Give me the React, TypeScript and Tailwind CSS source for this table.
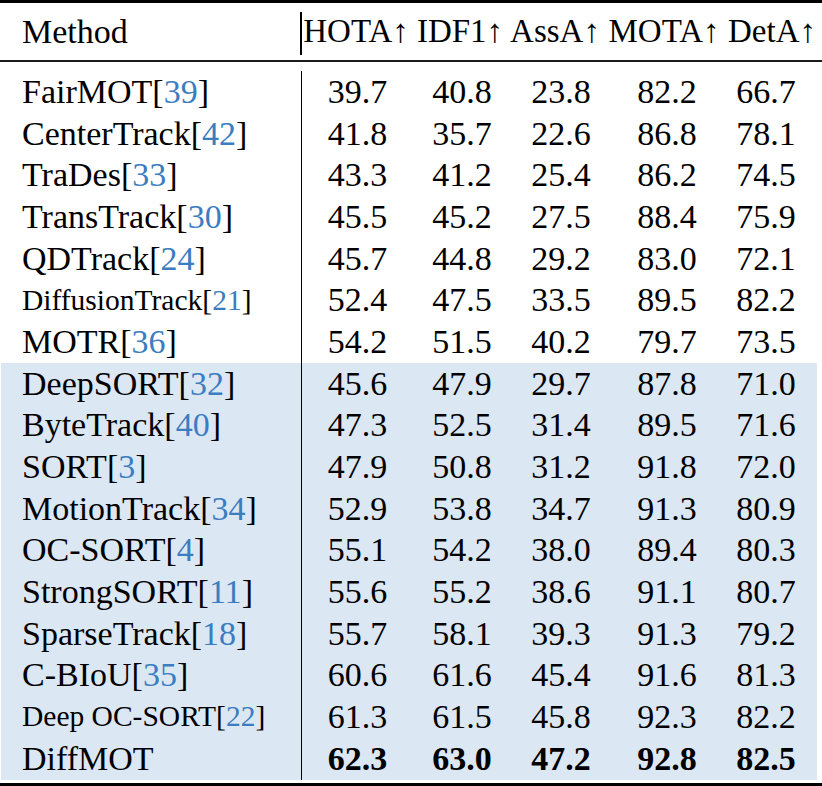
const HEADERS = ['HOTA↑', 'IDF1↑', 'AssA↑', 'MOTA↑', 'DetA↑'];

interface Row {
  name: string;
  cite?: string;
  small?: boolean;
  vals: string[];
  shaded?: boolean;
  best?: boolean;
}

const ROWS: Row[] = [
  { name: 'FairMOT', cite: '39', vals: ['39.7', '40.8', '23.8', '82.2', '66.7'] },
  { name: 'CenterTrack', cite: '42', vals: ['41.8', '35.7', '22.6', '86.8', '78.1'] },
  { name: 'TraDes', cite: '33', vals: ['43.3', '41.2', '25.4', '86.2', '74.5'] },
  { name: 'TransTrack', cite: '30', vals: ['45.5', '45.2', '27.5', '88.4', '75.9'] },
  { name: 'QDTrack', cite: '24', vals: ['45.7', '44.8', '29.2', '83.0', '72.1'] },
  { name: 'DiffusionTrack', cite: '21', small: true, vals: ['52.4', '47.5', '33.5', '89.5', '82.2'] },
  { name: 'MOTR', cite: '36', vals: ['54.2', '51.5', '40.2', '79.7', '73.5'] },
  { name: 'DeepSORT', cite: '32', shaded: true, vals: ['45.6', '47.9', '29.7', '87.8', '71.0'] },
  { name: 'ByteTrack', cite: '40', shaded: true, vals: ['47.3', '52.5', '31.4', '89.5', '71.6'] },
  { name: 'SORT', cite: '3', shaded: true, vals: ['47.9', '50.8', '31.2', '91.8', '72.0'] },
  { name: 'MotionTrack', cite: '34', shaded: true, vals: ['52.9', '53.8', '34.7', '91.3', '80.9'] },
  { name: 'OC-SORT', cite: '4', shaded: true, vals: ['55.1', '54.2', '38.0', '89.4', '80.3'] },
  { name: 'StrongSORT', cite: '11', shaded: true, vals: ['55.6', '55.2', '38.6', '91.1', '80.7'] },
  { name: 'SparseTrack', cite: '18', shaded: true, vals: ['55.7', '58.1', '39.3', '91.3', '79.2'] },
  { name: 'C-BIoU', cite: '35', shaded: true, vals: ['60.6', '61.6', '45.4', '91.6', '81.3'] },
  { name: 'Deep OC-SORT', cite: '22', small: true, shaded: true, vals: ['61.3', '61.5', '45.8', '92.3', '82.2'] },
  { name: 'DiffMOT', shaded: true, best: true, vals: ['62.3', '63.0', '47.2', '92.8', '82.5'] },
];

export default function App() {
  return (
    <div className="w-[822px] h-[786px] bg-white text-black font-['Liberation_Serif',serif] overflow-hidden">
      {/* top rule */}
      <div className="h-[3px] bg-black" />

      {/* header */}
      <div className="h-[57px] grid grid-cols-[301px_110px_98px_92px_126px_90px] items-center text-[33px] leading-none">
        <div className="pl-[22px] h-full flex items-center text-[34px]">Method</div>
        {HEADERS.map((h, i) => (
          <div key={h} className="relative h-full flex items-center justify-center whitespace-nowrap">
            {i === 0 && <div className="absolute left-[-1px] top-[9px] bottom-[5px] w-[1.5px] bg-black" />}
            {h}
          </div>
        ))}
      </div>

      {/* mid rule */}
      <div className="h-[2px] bg-[#1a1a1a]" />
      <div className="h-[9px]" />

      {/* body */}
      <div>
        {ROWS.map((r) => (
          <div
            key={r.name}
            className={`h-[41.7px] ml-[1px] w-[816px] grid grid-cols-[300px_112px_98px_100px_112px_86px] items-center leading-none ${
              r.shaded ? 'bg-[#dce7f4]' : ''
            }`}
          >
            <div className={`pl-[21px] whitespace-nowrap ${r.small ? 'text-[29.5px]' : 'text-[34px]'}`}>
              {r.name}
              {r.cite && (
                <>
                  [<span className="text-[#3b7dc0]">{r.cite}</span>]
                </>
              )}
            </div>
            {r.vals.map((v, i) => (
              <div
                key={i}
                className={`h-full flex items-center justify-center text-[34px] ${
                  i === 0 ? 'border-l-[1.5px] border-black' : ''
                } ${r.best ? 'font-bold' : ''}`}
              >
                {v}
              </div>
            ))}
          </div>
        ))}
      </div>

      <div className="h-[3px]" />
      {/* bottom rule */}
      <div className="h-[3px] bg-black" />
    </div>
  );
}
